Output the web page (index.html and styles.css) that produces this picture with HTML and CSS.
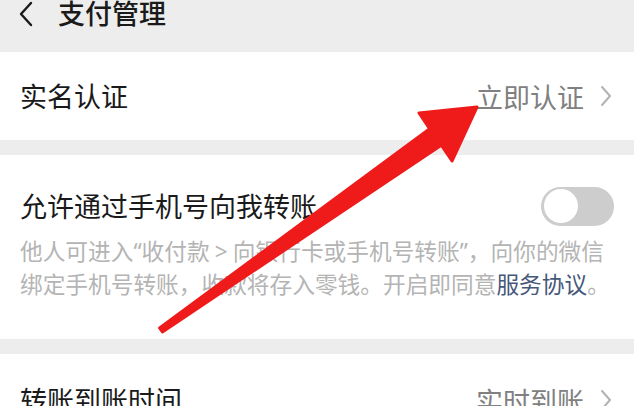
FILE: index.html
```html
<!DOCTYPE html>
<html lang="zh-CN">
<head>
    <meta charset="UTF-8">
    <meta name="viewport" content="width=device-width, initial-scale=1.0">
    <title>支付管理</title>
    <link rel="stylesheet" href="styles.css">
</head>
<body>
    <header class="topbar">
        <svg class="back-icon" viewBox="0 0 16 26" width="16" height="26">
            <path d="M13 2 L3 13 L13 24" fill="none" stroke="#1a1a1a" stroke-width="2.4" stroke-linecap="round" stroke-linejoin="round"/>
        </svg>
        <h1 class="page-title">支付管理</h1>
    </header>

    <section class="group">
        <div class="cell">
            <span class="cell-title">实名认证</span>
            <span class="cell-value">立即认证
                <svg class="arrow-right" viewBox="0 0 12 22" width="12" height="22">
                    <path d="M2 2 L10 11 L2 20" fill="none" stroke="#b2b2b2" stroke-width="2" stroke-linecap="round" stroke-linejoin="round"/>
                </svg>
            </span>
        </div>
    </section>

    <section class="group">
        <div class="cell cell-switch">
            <span class="cell-title">允许通过手机号向我转账</span>
            <span class="switch"><span class="switch-knob"></span></span>
        </div>
        <p class="cell-desc">
            <span class="desc-line">他人可进入<span class="latin">“</span>收付款 <span class="latin">&gt;</span> 向银行卡或手机号转账<span class="latin">”</span>，向你的微信</span>
            <span class="desc-line">绑定手机号转账，收款将存入零钱。开启即同意<a href="#" class="link">服务协议</a>。</span>
        </p>
    </section>

    <section class="group">
        <div class="cell cell-last">
            <span class="cell-title">转账到账时间</span>
            <span class="cell-value">实时到账
                <svg class="arrow-right" viewBox="0 0 12 22" width="12" height="22">
                    <path d="M2 2 L10 11 L2 20" fill="none" stroke="#b2b2b2" stroke-width="2" stroke-linecap="round" stroke-linejoin="round"/>
                </svg>
            </span>
        </div>
    </section>

    <!-- red annotation arrow drawn over the page -->
    <svg class="annotation" viewBox="0 0 634 406" width="634" height="406">
        <polygon points="159.6,328 429.7,128.8 419,113 477,107 452,161 441.3,145.2 162.4,332"
                 fill="#ef1b1b" stroke="#ef1b1b" stroke-width="3" stroke-linejoin="round"/>
    </svg>
</body>
</html>
```

FILE: styles.css
```css
:root {
    --page-bg: #ededed;
    --cell-bg: #ffffff;
    --text: #1a1a1a;
    --value: #808080;
    --desc: #b4b4b4;
    --link: #46587a;
}

* {
    margin: 0;
    padding: 0;
    box-sizing: border-box;
}

body {
    width: 634px;
    height: 406px;
    overflow: hidden;
    position: relative;
    background-color: var(--page-bg);
    color: var(--text);
    font-family: "Noto Sans CJK SC", "Noto Sans", sans-serif;
}

.topbar {
    height: 52px;
    display: flex;
    align-items: flex-start;
    padding: 0 0 0 18px;
}

.back-icon {
    margin-top: 1px;
}

.page-title {
    font-size: 27px;
    font-weight: 500;
    line-height: 28px;
    margin-left: 24px;
    margin-top: -1px;
}

.group {
    background-color: var(--cell-bg);
    margin-bottom: 15px;
}

.cell {
    display: flex;
    align-items: center;
    justify-content: space-between;
    height: 88px;
    padding: 0 22px 0 20px;
}

.cell-title {
    font-size: 27px;
    line-height: 32px;
}

.cell-value {
    display: flex;
    align-items: center;
    gap: 16px;
    font-size: 27px;
    color: var(--value);
}

.cell-switch {
    height: 96px;
    padding-top: 6px;
    padding-right: 20px;
}

.switch {
    width: 73px;
    height: 39px;
    border-radius: 20px;
    background-color: #cdcdcd;
    display: flex;
    align-items: center;
    padding-left: 3px;
}

.switch-knob {
    width: 34px;
    height: 34px;
    border-radius: 50%;
    background-color: #ffffff;
}

.cell-desc {
    font-size: 22.7px;
    line-height: 32px;
    color: var(--desc);
    padding: 0 0 39px 20px;
    margin-top: -16px;
}

.desc-line {
    display: block;
    white-space: nowrap;
}

.latin {
    font-family: "Noto Sans", sans-serif;
}

.link {
    color: var(--link);
    text-decoration: none;
}

.cell-last {
    height: 90px;
    padding-top: 2px;
}

.annotation {
    position: absolute;
    left: 0;
    top: 0;
    pointer-events: none;
}
```
